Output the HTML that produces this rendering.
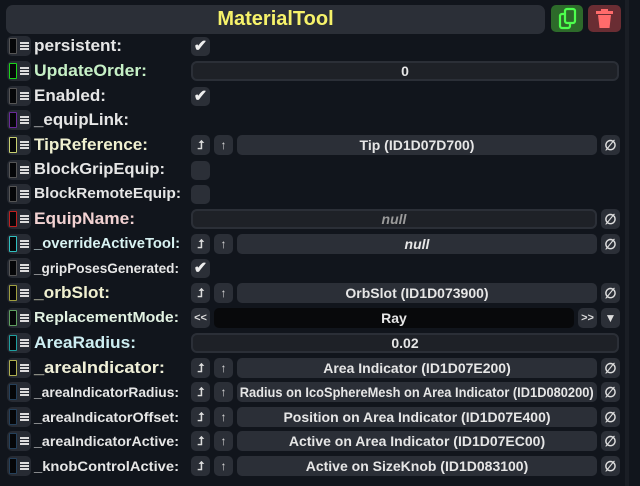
<!DOCTYPE html><html><head><meta charset="utf-8"><style>
*{margin:0;padding:0;box-sizing:border-box}
body{width:640px;height:486px;background:#11151c;position:relative;overflow:hidden;font-family:"Liberation Sans",sans-serif;font-weight:bold;color:#e6e6e6}
.a{position:absolute}
.hdr{left:6px;top:5px;width:539px;height:29px;background:#2b2f37;border-radius:7px;color:#f6f26a;font-size:20px;text-align:center;line-height:29px}
.div{left:625px;top:0;width:4px;height:486px;background:#1a1e25}
.h{position:absolute;left:7px;width:24px;height:20px;background:#272b33;border-radius:5px}
.h i{position:absolute;left:2px;top:2px;width:8px;height:16px;background:#050608;border:1.5px solid #555;border-radius:1px}
.h b{position:absolute;left:13px;top:6px;width:9px;height:8px;border-top:2px solid #ddd;border-bottom:2px solid #ddd}
.h b:after{content:"";position:absolute;left:0;top:1px;width:9px;height:2px;background:#ddd}
.l{position:absolute;left:34px;white-space:nowrap;transform-origin:0 50%;line-height:20px}
.f{position:absolute;left:237px;width:360px;height:20px;background:#2b2f37;border-radius:5px;font-size:14px;text-align:center;line-height:20px;color:#e6e6e6;white-space:nowrap}
.fx{display:flex;justify-content:center}
.fx span{flex:none;transform-origin:50% 50%}
.e{position:absolute;left:191px;width:428px;height:20px;background:#1e2127;border:2px solid #2b2f37;border-radius:6px;font-size:14px;text-align:center;line-height:16px}
.b{position:absolute;width:19px;height:20px;background:#2b2f37;border-radius:5px;font-size:12px;text-align:center;line-height:20px;color:#ddd}
.c{position:absolute;left:191px;width:19px;height:19px;background:#2b2f37;border-radius:5px;font-size:16px;text-align:center;line-height:19px;color:#eee}
</style></head><body>
<div class="a div"></div>
<div class="a hdr">MaterialTool</div>
<div class="a" style="left:551px;top:5px;width:32px;height:27px;background:#2d6a2a;border-radius:5px"><svg width="32" height="27"><rect x="9" y="9" width="10" height="14" rx="2" fill="none" stroke="#4dff4d" stroke-width="2.2"/><rect x="14" y="4" width="10" height="14" rx="2" fill="#2d6a2a" stroke="#4dff4d" stroke-width="2.2"/></svg></div>
<div class="a" style="left:588px;top:5px;width:33px;height:27px;background:#6a2d33;border-radius:5px"><svg width="33" height="27"><rect x="13" y="4" width="7" height="3" fill="#ff6b6b"/><rect x="8" y="6" width="17" height="3" fill="#ff6b6b"/><path d="M10 10h13l-1.5 13h-10z" fill="#ff6b6b"/></svg></div>

<div class="h" style="top:36px"><i></i><b></b></div><div class="l" data-w="88" style="top:36px;font-size:17px">persistent:</div>
<div class="c" style="top:37px">✔</div>

<div class="h" style="top:61px"><i style="border-color:#1cd41c"></i><b></b></div><div class="l" data-w="113" style="top:61px;font-size:17px;color:#c6f0c6">UpdateOrder:</div>
<div class="e" style="top:61px">0</div>

<div class="h" style="top:86px"><i></i><b></b></div><div class="l" data-w="72" style="top:86px;font-size:17px">Enabled:</div>
<div class="c" style="top:87px">✔</div>

<div class="h" style="top:110px"><i style="border-color:#6a2a9a"></i><b></b></div><div class="l" data-w="95" style="top:110px;font-size:17px">_equipLink:</div>

<div class="h" style="top:135px"><i style="border-color:#c8d070"></i><b></b></div><div class="l" data-w="114" style="top:135px;font-size:17px;color:#f0f0d0">TipReference:</div>
<div class="b" style="left:191px;top:135px">⮥</div><div class="b" style="left:214px;top:135px">↑</div><div class="f" style="top:135px">Tip (ID1D07D700)</div><div class="b" style="left:601px;top:135px;font-size:14px">∅</div>

<div class="h" style="top:160px"><i></i><b></b></div><div class="l" data-w="131" style="top:160px;font-size:16px">BlockGripEquip:</div>
<div class="c" style="top:161px"></div>

<div class="h" style="top:184px"><i></i><b></b></div><div class="l" data-w="147" style="top:184px;font-size:15px">BlockRemoteEquip:</div>
<div class="c" style="top:185px"></div>

<div class="h" style="top:209px"><i style="border-color:#c02020"></i><b></b></div><div class="l" data-w="101" style="top:209px;font-size:17px;color:#f2d2d2">EquipName:</div>
<div class="e" style="top:209px;width:406px;color:#9a9a9a;font-style:italic">null</div><div class="b" style="left:601px;top:209px;font-size:14px">∅</div>

<div class="h" style="top:234px"><i style="border-color:#30c0c0"></i><b></b></div><div class="l" data-w="146" style="top:234px;font-size:15px;color:#d8f2f2">_overrideActiveTool:</div>
<div class="b" style="left:191px;top:234px">⮥</div><div class="b" style="left:214px;top:234px">↑</div><div class="f" style="top:234px;font-style:italic">null</div><div class="b" style="left:601px;top:234px;font-size:14px">∅</div>

<div class="h" style="top:258px"><i></i><b></b></div><div class="l" data-w="145" style="top:258px;font-size:14px">_gripPosesGenerated:</div>
<div class="c" style="top:259px">✔</div>

<div class="h" style="top:283px"><i style="border-color:#a0a040"></i><b></b></div><div class="l" data-w="76" style="top:283px;font-size:17px;color:#f0f0d0">_orbSlot:</div>
<div class="b" style="left:191px;top:283px">⮥</div><div class="b" style="left:214px;top:283px">↑</div><div class="f" style="top:283px">OrbSlot (ID1D073900)</div><div class="b" style="left:601px;top:283px;font-size:14px">∅</div>

<div class="h" style="top:308px"><i style="border-color:#60a060"></i><b></b></div><div class="l" data-w="145" style="top:308px;font-size:15px;color:#e2f2e2">ReplacementMode:</div>
<div class="b" style="left:191px;top:308px;font-size:11px">&lt;&lt;</div><div class="f" style="left:214px;top:308px;background:#08090b">Ray</div><div class="b" style="left:578px;top:308px;font-size:11px">&gt;&gt;</div><div class="b" style="left:601px;top:308px">▼</div>

<div class="h" style="top:333px"><i style="border-color:#20a0a0"></i><b></b></div><div class="l" data-w="102" style="top:333px;font-size:17px;color:#cdeef2">AreaRadius:</div>
<div class="e" style="top:333px">0.02</div>

<div class="h" style="top:358px"><i style="border-color:#b0b050"></i><b></b></div><div class="l" data-w="131" style="top:358px;font-size:17px;color:#f0f0d8">_areaIndicator:</div>
<div class="b" style="left:191px;top:358px">⮥</div><div class="b" style="left:214px;top:358px">↑</div><div class="f" style="top:358px">Area Indicator (ID1D07E200)</div><div class="b" style="left:601px;top:358px;font-size:14px">∅</div>

<div class="h" style="top:382px"><i style="border-color:#25405a"></i><b></b></div><div class="l" data-w="145" style="top:382px;font-size:14px">_areaIndicatorRadius:</div>
<div class="b" style="left:191px;top:382px">⮥</div><div class="b" style="left:214px;top:382px">↑</div><div class="f fx" data-w="354" style="top:382px"><span>Radius on IcoSphereMesh on Area Indicator (ID1D080200)</span></div><div class="b" style="left:601px;top:382px;font-size:14px">∅</div>

<div class="h" style="top:407px"><i style="border-color:#25405a"></i><b></b></div><div class="l" data-w="145" style="top:407px;font-size:14px">_areaIndicatorOffset:</div>
<div class="b" style="left:191px;top:407px">⮥</div><div class="b" style="left:214px;top:407px">↑</div><div class="f" style="top:407px">Position on Area Indicator (ID1D07E400)</div><div class="b" style="left:601px;top:407px;font-size:14px">∅</div>

<div class="h" style="top:431px"><i style="border-color:#25405a"></i><b></b></div><div class="l" data-w="145" style="top:431px;font-size:14px">_areaIndicatorActive:</div>
<div class="b" style="left:191px;top:431px">⮥</div><div class="b" style="left:214px;top:431px">↑</div><div class="f" style="top:431px">Active on Area Indicator (ID1D07EC00)</div><div class="b" style="left:601px;top:431px;font-size:14px">∅</div>

<div class="h" style="top:456px"><i style="border-color:#25405a"></i><b></b></div><div class="l" data-w="145" style="top:456px;font-size:14px">_knobControlActive:</div>
<div class="b" style="left:191px;top:456px">⮥</div><div class="b" style="left:214px;top:456px">↑</div><div class="f" style="top:456px">Active on SizeKnob (ID1D083100)</div><div class="b" style="left:601px;top:456px;font-size:14px">∅</div>

<script>
document.querySelectorAll('.l').forEach(function(e){var w=+e.dataset.w;var r=e.getBoundingClientRect().width;if(r>0)e.style.transform='scaleX('+(w/r)+')';});
document.querySelectorAll('.fx').forEach(function(e){var s=e.firstElementChild;var r=s.getBoundingClientRect().width,w=+e.dataset.w;if(r>w){s.style.transform='scaleX('+(w/r)+')';}});
</script>
</body></html>
